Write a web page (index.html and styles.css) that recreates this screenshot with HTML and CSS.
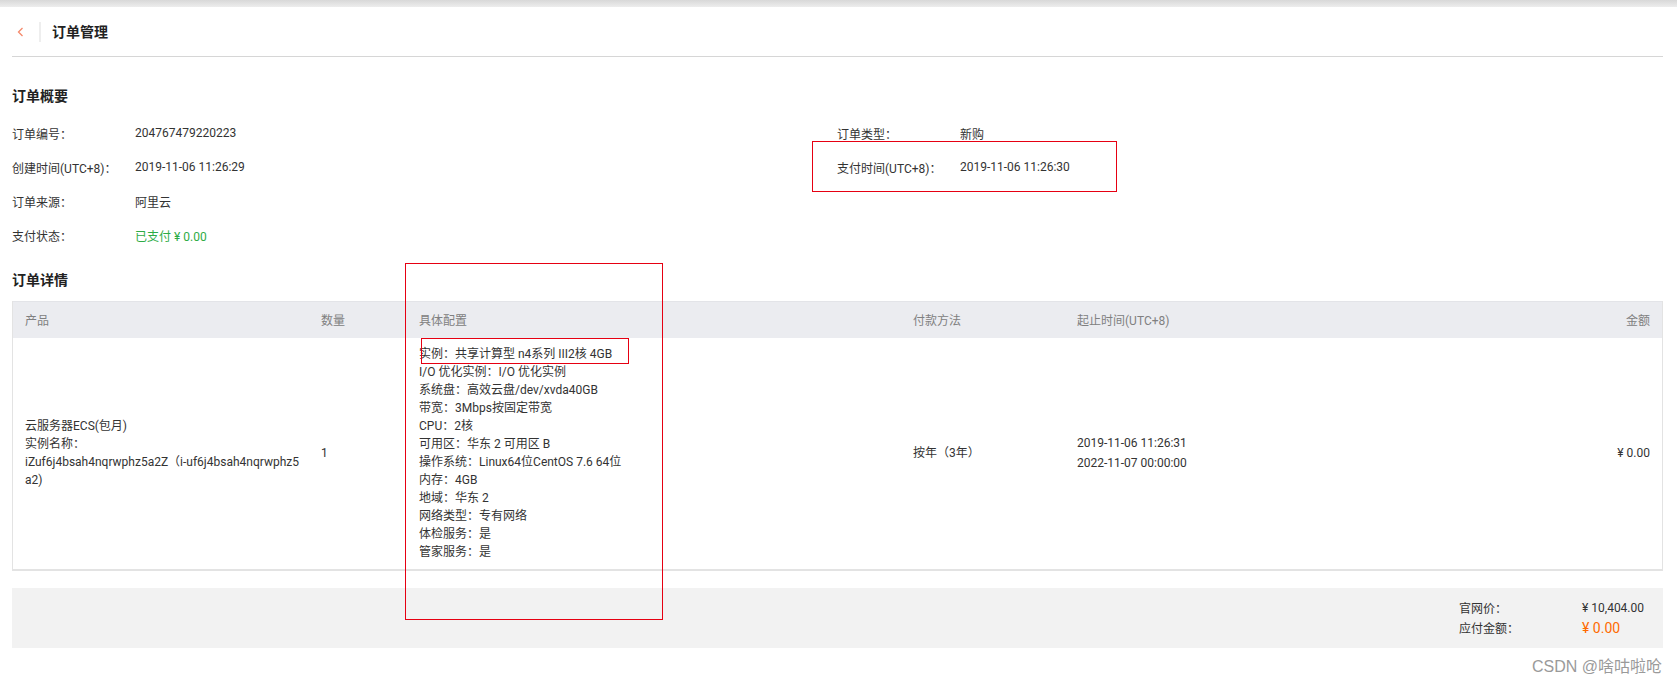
FILE: index.html
```html
<!DOCTYPE html>
<html lang="zh-CN">
<head>
<meta charset="utf-8">
<title>订单管理</title>
<link rel="stylesheet" href="styles.css">
</head>
<body>
<div class="topbar"></div>
<div class="page">
  <div class="header">
    <span class="back">
      <svg width="7" height="10" viewBox="0 0 7 10"><path d="M5.5 1 L1.5 5 L5.5 9" fill="none" stroke="#f5896b" stroke-width="1.3"/></svg>
    </span>
    <span class="divider"></span>
    <span class="title">订单管理</span>
  </div>

  <div class="section-title first">订单概要</div>
  <div class="summary">
    <div class="col">
      <div class="row"><span class="label">订单编号：</span><span class="val">204767479220223</span></div>
      <div class="row"><span class="label">创建时间(UTC+8)：</span><span class="val">2019-11-06 11:26:29</span></div>
      <div class="row"><span class="label">订单来源：</span><span class="val">阿里云</span></div>
      <div class="row"><span class="label">支付状态：</span><span class="val paid">已支付 ¥ 0.00</span></div>
    </div>
    <div class="col">
      <div class="row"><span class="label">订单类型：</span><span class="val">新购</span></div>
      <div class="row"><span class="label">支付时间(UTC+8)：</span><span class="val">2019-11-06 11:26:30</span></div>
    </div>
  </div>

  <div class="section-title">订单详情</div>
  <div class="table-wrap">
    <table class="detail">
      <colgroup>
        <col class="c1"><col class="c2"><col class="c3"><col class="c4"><col class="c5"><col class="c6">
      </colgroup>
      <thead>
        <tr><th>产品</th><th>数量</th><th>具体配置</th><th>付款方法</th><th>起止时间(UTC+8)</th><th class="right">金额</th></tr>
      </thead>
      <tbody>
        <tr>
          <td class="product">云服务器ECS(包月)<br>实例名称：<br><span class="nowrap">iZuf6j4bsah4nqrwphz5a2Z（i-uf6j4bsah4nqrwphz5</span><br>a2)</td>
          <td>1</td>
          <td class="config">
            <div>实例：共享计算型 n4系列 III2核 4GB</div>
            <div>I/O 优化实例：I/O 优化实例</div>
            <div>系统盘：高效云盘/dev/xvda40GB</div>
            <div>带宽：3Mbps按固定带宽</div>
            <div>CPU：2核</div>
            <div>可用区：华东 2 可用区 B</div>
            <div>操作系统：Linux64位CentOS 7.6 64位</div>
            <div>内存：4GB</div>
            <div>地域：华东 2</div>
            <div>网络类型：专有网络</div>
            <div>体检服务：是</div>
            <div>管家服务：是</div>
          </td>
          <td>按年（3年）</td>
          <td class="dates">2019-11-06 11:26:31<br>2022-11-07 00:00:00</td>
          <td class="right">¥ 0.00</td>
        </tr>
      </tbody>
    </table>
  </div>

  <div class="footer">
    <div class="totals">
      <span class="tlabel">官网价：</span><span class="tval">¥ 10,404.00</span>
      <span class="tlabel">应付金额：</span><span class="tval due">¥ 0.00</span>
    </div>
  </div>
  <div class="watermark">CSDN @啥咕啦呛</div>
</div>

<div class="mark mark-paytime"></div>
<div class="mark mark-config"></div>
<div class="mark mark-instance"></div>
</body>
</html>
```

FILE: styles.css
```css
html, body {
  margin: 0;
  padding: 0;
  background: #fff;
}
body {
  position: relative;
  font-family: Roboto, "Noto Sans CJK SC", sans-serif;
  font-size: 12px;
  color: #333;
  width: 1677px;
  height: 682px;
  overflow: hidden;
}
.topbar {
  height: 7px;
  background: linear-gradient(#d8d8d8, #ededed);
}
.page {
  padding: 0 14px 0 12px;
}
.header {
  height: 49px;
  border-bottom: 1px solid #d6d6d6;
  display: flex;
  align-items: center;
}
.back {
  display: flex;
  align-items: center;
  margin-left: 5px;
  width: 7px;
  height: 10px;
}
.back svg { display: block; }
.divider {
  width: 2px;
  height: 20px;
  background: #eeeeee;
  margin-left: 15px;
}
.title {
  margin-left: 11px;
  font-size: 14px;
  font-weight: bold;
  color: #222;
  line-height: 20px;
}
.section-title {
  font-size: 14px;
  font-weight: bold;
  color: #222;
  line-height: 20px;
  margin-top: 18px;
}
.section-title.first {
  margin-top: 29px;
}
.summary {
  display: grid;
  grid-template-columns: 825px 1fr;
  margin-top: 10px;
}
.row {
  display: flex;
  height: 34px;
  align-items: center;
}
.label {
  width: 123px;
  flex: none;
}
.paid {
  color: #2eab45;
}
.table-wrap {
  margin-top: 11px;
  border-left: 1px solid #e3e3e3;
  border-right: 1px solid #e3e3e3;
  border-bottom: 2px solid #e3e3e3;
}
.detail {
  width: 100%;
  border-collapse: collapse;
  table-layout: fixed;
}
.c1 { width: 296px; }
.c2 { width: 98px; }
.c3 { width: 494px; }
.c4 { width: 164px; }
.c5 { width: 350px; }
.detail th {
  background: #ebecf0;
  height: 36px;
  padding: 0 12px;
  font-weight: normal;
  color: #808080;
  text-align: left;
  border-top: 1px solid #e3e4e8;
  box-sizing: border-box;
}
.detail td {
  padding: 7px 12px 8px;
  line-height: 18px;
  vertical-align: middle;
  color: #333;
}
.nowrap {
  white-space: nowrap;
}
.detail .right {
  text-align: right;
}
.detail td.dates {
  line-height: 20px;
}
.config div {
  line-height: 18px;
}
.footer {
  margin-top: 17px;
  height: 60px;
  background: #f2f2f2;
  display: flex;
  justify-content: flex-end;
  align-items: center;
}
.totals {
  display: grid;
  grid-template-columns: 123px 81px;
  grid-auto-rows: 20px;
  align-items: center;
}
.tval.due {
  color: #ff6a00;
  font-size: 14px;
}
.watermark {
  text-align: right;
  font-size: 16px;
  line-height: 22px;
  margin-top: 8px;
  margin-right: 1px;
  color: #9a9a9a;
  font-family: "Liberation Sans", "Noto Sans CJK SC", sans-serif;
}
.mark {
  position: absolute;
  border: 1px solid #e60012;
  box-sizing: border-box;
}
.mark-paytime { left: 812px; top: 141px; width: 305px; height: 51px; }
.mark-config { left: 405px; top: 263px; width: 258px; height: 357px; }
.mark-instance { left: 421px; top: 338px; width: 208px; height: 26px; }
```
